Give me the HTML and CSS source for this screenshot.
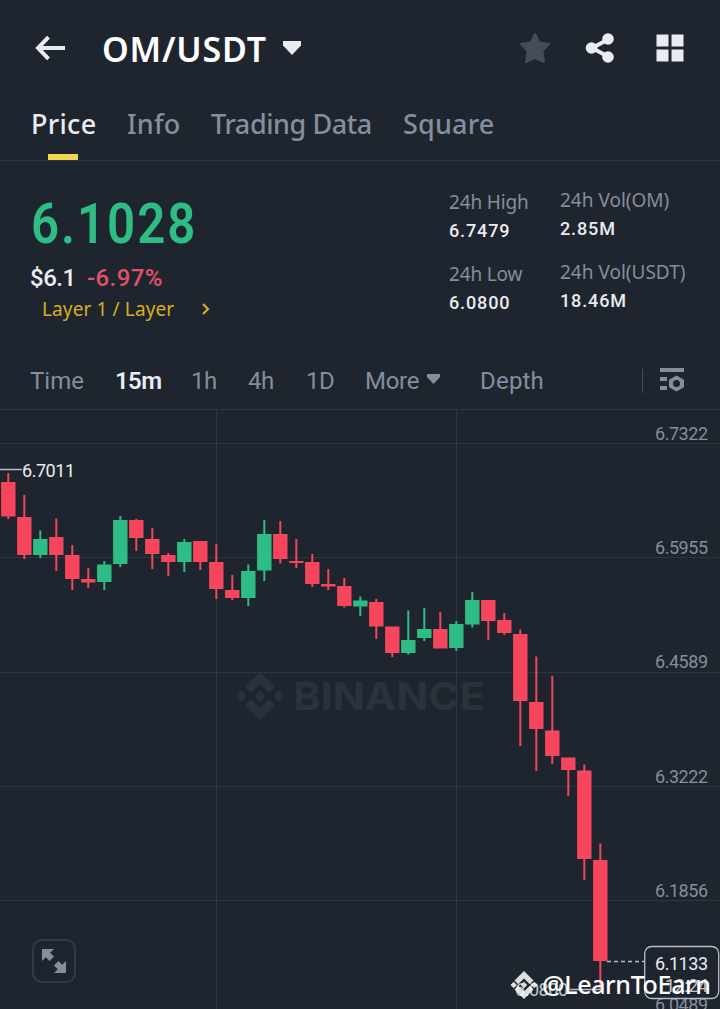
FILE: index.html
```html
<!DOCTYPE html>
<html lang="en">
<head>
<meta charset="utf-8">
<title>OM/USDT</title>
<link rel="stylesheet" href="styles.css">
</head>
<body>
<main class="app">
  <header class="topbar">
    <svg class="back" width="32" height="26" viewBox="0 0 32 26"><path d="M31 13H4M14.5 2.200L4 13L14.500 23.800" fill="none" stroke="#eaecef" stroke-width="4"/></svg>
    <h1 class="pair">OM/USDT</h1>
    <svg class="caret" width="18" height="14" viewBox="0 0 18 14"><path d="M0 0H18V4.500L9 14L0 4.500Z" fill="#eaecef"/></svg>
    <div class="actions">
      <svg width="32" height="32" viewBox="0 0 32 32"><path d="M16 2L20.200 10.500L30 12L23.300 19.200L25 30L16 26L7 30L8.700 19.200L2 12L11.800 10.500Z" fill="#474d57" stroke="#474d57" stroke-width="2" stroke-linejoin="round"/></svg>
      <svg width="30" height="32" viewBox="0 0 30 32"><path d="M24 7L7 16L24 25" fill="none" stroke="#eaecef" stroke-width="4"/><g fill="#eaecef"><circle cx="23" cy="7" r="5.800"/><circle cx="6.500" cy="16" r="5.800"/><circle cx="23" cy="25" r="5.800"/></g></svg>
      <svg width="28" height="28" viewBox="0 0 28 28"><path d="M.5.5H12.500V12.500H.5ZM15.500.5H27.500V12.500H15.500ZM.5 15.500H12.500V27.500H.5ZM15.500 15.500H27.500V27.500H15.500Z" fill="#eaecef"/></svg>
    </div>
  </header>
  <nav class="tabs">
    <span class="tab tab-active">Price</span><span class="tab tab-info">Info</span><span class="tab tab-data">Trading Data</span><span class="tab tab-square">Square</span>
  </nav>
  <section class="summary">
    <div class="quote">
      <div class="last">6.1028</div>
      <div class="change"><span class="fiat">$6.1</span><span class="percent">-6.97%</span></div>
      <div class="tag"><span>Layer 1 / Layer</span><svg width="8" height="12" viewBox="0 0 8 12"><path d="M1 1L6 6L1 11" fill="none" stroke="#d9ae1e" stroke-width="2.200"/></svg></div>
    </div>
    <dl class="stats stats-price">
      <div><dt>24h High</dt><dd>6.7479</dd></div>
      <div><dt>24h Low</dt><dd>6.0800</dd></div>
    </dl>
    <dl class="stats stats-volume">
      <div><dt>24h Vol(OM)</dt><dd>2.85M</dd></div>
      <div><dt>24h Vol(USDT)</dt><dd>18.46M</dd></div>
    </dl>
  </section>
  <nav class="intervals">
    <span class="i-time">Time</span><span class="i-15m">15m</span><span class="i-1h">1h</span><span class="i-4h">4h</span><span class="i-1d">1D</span><span class="i-more">More</span><svg class="more-caret" width="13" height="10" viewBox="0 0 13 10"><path d="M0 0H13V3L6.500 10L0 3Z" fill="#848e9c"/></svg><span class="i-depth">Depth</span>
    <i class="divider"></i>
    <svg class="settings" width="25" height="24" viewBox="0 0 25 24"><g fill="#848e9c"><path d="M0 0H24V4H0ZM0 9H7V13H0ZM0 18H7V22H0Z"/><path fill-rule="evenodd" d="M16.500 7.500L24 11.700V19.300L16.500 23.500L9 19.300V11.700ZM16.500 12A3.500 3.500 0 1 0 16.500 19A3.500 3.500 0 1 0 16.500 12Z"/></g></svg>
  </nav>
  <svg class="chart" width="720" height="600" viewBox="0 409 720 600">
    <path class="grid" d="M0 409.500H720M0 443.500H720M0 557.500H720M0 672.500H720M0 786.500H720M0 900.500H720M216.500 410V1009M456.500 410V1009"/>
    <g class="brand">
      <path d="M260 672L275 687L269 693L260 684L251 693L245 687ZM260 720L275 705L269 699L260 708L251 699L245 705ZM260 690.500L265.500 696L260 701.500L254.500 696ZM241 690.500L246.500 696L241 701.500L235.500 696ZM279 690.500L284.500 696L279 701.500L273.500 696Z"/>
      <text x="293" y="710" textLength="192" lengthAdjust="spacingAndGlyphs">BINANCE</text>
    </g>
    <g id="candles"></g>
    <path d="M0 469.500H22" stroke="#b7bdc6" stroke-width="1.500"/>
    <text class="mark" x="22" y="477" textLength="53">6.7011</text>
    <g class="axis">
      <text x="655" y="440" textLength="53">6.7322</text>
      <text x="655" y="554" textLength="53">6.5955</text>
      <text x="655" y="668" textLength="53">6.4589</text>
      <text x="655" y="783" textLength="53">6.3222</text>
      <text x="655" y="897" textLength="53">6.1856</text>
      <text x="655" y="1011" textLength="53">6.0489</text>
    </g>
    <path d="M607 961.500H645" stroke="#b7bdc6" stroke-width="1.500" stroke-dasharray="4 3"/>
    <rect x="644.700" y="946.500" width="74" height="52" rx="7" fill="#1f252f" stroke="#b7bdc6" stroke-width="1.300"/>
    <text class="mark" x="655" y="970" textLength="53">6.1133</text>
    <text class="mark dim" x="665" y="992" textLength="43">12:24</text>
    <text class="mark dim" x="515" y="996" textLength="53">6.0800</text>
    <path d="M570 989.500H600" stroke="#b7bdc6" stroke-width="1.500"/>
    <g class="expand">
      <rect x="33" y="940" width="42" height="42" rx="9"/>
      <path d="M42 949H54L50.200 952.800L54 956.600L49.600 961L45.800 957.200L42 961ZM66 973H54L57.800 969.200L54 965.400L58.400 961L62.200 964.800L66 961Z"/>
    </g>
    <g class="author">
      <path d="M524 971L533.500 980.500L529.800 984.200L524 978.500L518.200 984.200L514.500 980.500ZM524 999L533.500 989.500L529.800 985.800L524 991.500L518.200 985.800L514.500 989.500ZM524 981.800L527.200 985L524 988.200L520.800 985ZM513.700 981.800L516.900 985L513.700 988.200L510.500 985ZM534.300 981.800L537.500 985L534.300 988.200L531.100 985Z"/>
      <text x="542" y="994" textLength="169">@LearnToEarn</text>
    </g>
  </svg>
</main>
<script src="chart.js"></script>
</body>
</html>
```
FILE: styles.css
```css
* { box-sizing: border-box; }
body { margin: 0; background: #1f252f; color: #eaecef; font-family: Roboto, "Liberation Sans", sans-serif; }
.app { width: 720px; height: 1009px; overflow: hidden; display: flex; flex-direction: column; background: #1f252f; }
svg { display: block; flex: none; }
.topbar { height: 96px; padding: 0 36px 0 34px; display: flex; align-items: center; flex: none; }
.pair { margin: 2px 0 0 36px; width: 181px; font: 600 34px/40px "Noto Sans", sans-serif; color: #fff; letter-spacing: .8px; white-space: nowrap; }
.caret { margin-left: 0; }
.actions { margin-left: auto; display: flex; align-items: center; }
.actions svg:nth-child(2) { margin-left: 34px; }
.actions svg:nth-child(3) { margin-left: 41px; }
.tabs { height: 65px; flex: none; display: flex; padding: 9px 0 0 31px; border-bottom: 1px solid #2f3641; font-family: "Noto Sans", sans-serif; font-size: 27px; line-height: 38px; font-weight: 500; color: #848e9c; white-space: nowrap; }
.tab-active { position: relative; width: 96px; color: #eaecef; letter-spacing: .3px; }
.tab-active::after { content: ""; position: absolute; left: 17px; top: 49px; width: 30px; height: 6px; background: #f0d54f; }
.tab-info { width: 84px; letter-spacing: .2px; }
.tab-data { width: 192px; letter-spacing: -.42px; }
.tab-square { letter-spacing: .2px; }
.summary { height: 190px; flex: none; display: flex; }
.quote { width: 449px; padding: 31px 0 0 31px; }
.last { font-size: 56px; line-height: 64px; height: 70px; font-weight: 600; color: #2ebd85; letter-spacing: 2.2px; transform: scaleX(.88); transform-origin: 0 0; }
.change { display: flex; font-size: 24px; line-height: 32px; font-weight: 500; }
.fiat { width: 57px; margin-left: -1px; letter-spacing: -.5px; }
.percent { color: #e0526a; letter-spacing: .4px; }
.tag { display: flex; align-items: center; padding-left: 11px; font: 19px/30px "Noto Sans", sans-serif; color: #d9ae1e; letter-spacing: .12px; }
.tag svg { margin-left: 28px; }
.stats { margin: 0; white-space: nowrap; }
.stats div { height: 72px; }
.stats dt { font: 19px/28px "Noto Sans", sans-serif; color: #848e9c; }
.stats dd { margin: 1px 0 -1px; font-size: 19px; line-height: 28px; font-weight: 500; letter-spacing: .9px; transform: scaleX(.95); transform-origin: 0 0; }
.stats-price { width: 111px; padding-top: 27px; }
.stats-price dt { letter-spacing: -.15px; }
.stats-volume { padding-top: 25px; }
.intervals { height: 58px; flex: none; display: flex; align-items: center; padding: 1px 0 0 30px; font-size: 24px; color: #848e9c; white-space: nowrap; }
.i-time { width: 85px; }
.i-15m { width: 76px; color: #eaecef; font-weight: 600; letter-spacing: -.6px; }
.i-1h { width: 57px; letter-spacing: -.4px; }
.i-4h { width: 58px; letter-spacing: -.4px; }
.i-1d { width: 59px; letter-spacing: -.4px; }
.i-more { width: 62px; letter-spacing: -.3px; }
.more-caret { margin-top: -3px; }
.i-depth { margin-left: 40px; letter-spacing: .2px; }
.divider { width: 1px; height: 24px; background: #474d57; margin-left: auto; }
.settings { margin: -2px 35px 0 17px; }
.chart { font-family: Roboto, sans-serif; }
.grid { stroke: #303640; fill: none; }
.brand { fill: #2b323c; font: 700 38px Inter, sans-serif; }
.up { fill: #2ebd85; }
.down { fill: #f6465d; }
.mark { fill: #eaecef; font-size: 18px; }
.dim { opacity: .8; }
.axis { fill: #848e9c; font-size: 18px; }
.expand rect { fill: #1f252f; stroke: #343b46; stroke-width: 2; }
.expand path { fill: #848e9c; }
.author { fill: #fff; font: 500 25px "Noto Sans", sans-serif; }
.author path { opacity: .85; }
```
FILE: chart.js
```js
// Each candle: direction, high, body top, body bottom, low (chart y units).
const candles = [
  ['down',473,482,516.5,519],['down',495,517,555,559],['up',530.5,539,555,558],['down',518.5,537,555,571],
  ['down',545,555,579,590],['down',568,579,582.5,588],['up',561,564.5,582,590],['up',516,520,564,567],
  ['down',519,520,538,551],['down',528,539,554,569],['down',553,555,562,576],['up',539,542,562,572],
  ['down',541,541,562,570],['down',544,562,589,599],['down',575,590,598,600],['up',564.5,571,598,606],
  ['up',520,534,570.5,581],['down',521,534,559,563.5],['down',539,561,563,568],['down',554,562,584,587],
  ['down',569,584,586.5,590],['down',578,586,606,607.5],['up',596.5,600.5,606.5,616],['down',599,602,626.5,639],
  ['down',626.5,626.5,653,657],['up',610.5,640,653,654.5],['up',608,629,638,641],['down',612,629,648.5,648.5],
  ['up',621,624,648,651],['up',592,600,624.5,627.5],['down',600,600,621,640],['down',613,620,633,635],
  ['down',629.5,634,701,746],['down',656.5,702,729,771],['down',676,730.5,756,764],['down',757.5,757.5,770,796],
  ['down',764.5,770.5,859,880],['down',843.5,860,961,990]
];
const ns = 'http://www.w3.org/2000/svg';
const layer = document.getElementById('candles');
candles.forEach(([dir, high, top, bottom, low], i) => {
  const x = 8.3 + i * 16;
  const p = document.createElementNS(ns, 'path');
  p.setAttribute('class', dir);
  p.setAttribute('d', `M${x - 7.2} ${top}h14.4V${bottom}h-14.4ZM${x - 1} ${high}h2V${low}h-2Z`);
  layer.appendChild(p);
});
```
